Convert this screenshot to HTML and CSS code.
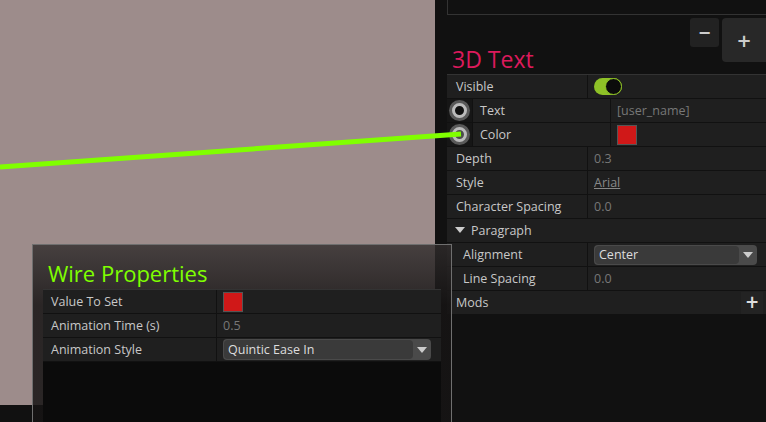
FILE: index.html
```html
<!DOCTYPE html>
<html lang="en">
<head>
    <meta charset="UTF-8">
    <title>Wire Editor</title>
    <link rel="stylesheet" href="styles.css">
</head>
<body>
    <div class="app">
        <div class="stage">
            <div class="canvas"></div>
        </div>

        <div class="inspector">
            <div class="topBox"></div>
            <div class="header">
                <h1 class="nodeTitle">3D Text</h1>
                <div class="zoomBtns">
                    <button class="zoomBtn small">&minus;</button>
                    <button class="zoomBtn big">+</button>
                </div>
            </div>

            <div class="props">
                <div class="row">
                    <div class="label">Visible</div>
                    <div class="value"><span class="toggle"><span class="knob"></span></span></div>
                </div>
                <div class="row">
                    <div class="socket"><span class="plug"></span></div>
                    <div class="label sockLabel">Text</div>
                    <div class="value">[user_name]</div>
                </div>
                <div class="row">
                    <div class="socket"><span class="plug linked"></span></div>
                    <div class="label sockLabel">Color</div>
                    <div class="value"><span class="swatch"></span></div>
                </div>
                <div class="row">
                    <div class="label">Depth</div>
                    <div class="value">0.3</div>
                </div>
                <div class="row">
                    <div class="label">Style</div>
                    <div class="value link">Arial</div>
                </div>
                <div class="row">
                    <div class="label">Character Spacing</div>
                    <div class="value">0.0</div>
                </div>
                <div class="row group">
                    <div class="label"><span class="caret"></span>Paragraph</div>
                </div>
                <div class="row">
                    <div class="label indent">Alignment</div>
                    <div class="value">
                        <div class="select"><span>Center</span><span class="arrow"></span></div>
                    </div>
                </div>
                <div class="row">
                    <div class="label indent">Line Spacing</div>
                    <div class="value">0.0</div>
                </div>
                <div class="row mods">
                    <div class="label">Mods</div>
                    <span class="addBtn">+</span>
                </div>
            </div>
        </div>
    </div>

    <div class="wirePanel">
        <h2 class="wireTitle">Wire Properties</h2>
        <div class="wireBody">
            <div class="row wide">
                <div class="label">Value To Set</div>
                <div class="value"><span class="swatch"></span></div>
            </div>
            <div class="row wide">
                <div class="label">Animation Time (s)</div>
                <div class="value">0.5</div>
            </div>
            <div class="row wide">
                <div class="label">Animation Style</div>
                <div class="value">
                    <div class="select"><span>Quintic Ease In</span><span class="arrow"></span></div>
                </div>
            </div>
        </div>
    </div>

    <svg class="wire" width="766" height="422" viewBox="0 0 766 422">
        <line x1="0" y1="167" x2="461" y2="134" stroke="#80ff00" stroke-width="5"/>
    </svg>
</body>
</html>
```

FILE: styles.css
```css
body {
    margin: 0;
    width: 766px;
    height: 422px;
    overflow: hidden;
    background: #111;
    font-family: "Open Sans", Arial, sans-serif;
    font-size: 12.5px;
    color: #c8c8c8;
    position: relative;
}
.app {
    display: flex;
    height: 422px;
}
.stage {
    width: 435px;
    background: #111;
}
.canvas {
    height: 405px;
    background: #9d8c8b;
}
.inspector {
    flex: 1;
    padding-left: 12px;
    display: flex;
    flex-direction: column;
}
.topBox {
    height: 14px;
    border-left: 1px solid #333;
    border-bottom: 1px solid #333;
}
.header {
    height: 59px;
    display: flex;
    justify-content: space-between;
    border-bottom: 1px solid #333;
}
.nodeTitle {
    margin: 0 0 1px 5px;
    align-self: flex-end;
    font-size: 23px;
    font-weight: normal;
    line-height: 28px;
    color: #dc1a5c;
}
.zoomBtns {
    display: flex;
    gap: 3px;
    margin-top: 3px;
}
.zoomBtn {
    border: none;
    padding: 0;
    color: #ccc;
    font-family: "DejaVu Sans", sans-serif;
    font-weight: bold;
}
.zoomBtn.small {
    width: 29px;
    height: 29px;
    background: #222;
    border-radius: 3px;
    font-size: 16px;
}
.zoomBtn.big {
    width: 44px;
    height: 44px;
    background: #282828;
    border-radius: 4px 0 0 4px;
    font-size: 18px;
}
.props {
    background: #111;
}
.row {
    display: flex;
    height: 23px;
    border-bottom: 1px solid #111;
    background: #1f1f1f;
}
.label {
    width: 131px;
    padding-left: 9px;
    line-height: 24px;
    white-space: nowrap;
}
.value {
    flex: 1;
    border-left: 1px solid #111;
    padding-left: 6px;
    line-height: 24px;
    color: #777;
    display: flex;
    align-items: center;
}
.link {
    text-decoration: underline;
    color: #888;
}
.socket {
    width: 25px;
    background: #161616;
    display: flex;
    align-items: center;
    justify-content: center;
    border-right: 1px solid #111;
}
.plug {
    width: 9px;
    height: 9px;
    border-radius: 50%;
    background: #111;
    border: 3px solid #bbb;
    box-shadow: 0 0 0 3px #595959;
}
.plug.linked {
    background: #4c4c4c;
}
.sockLabel {
    width: 130px;
    padding-left: 7px;
}
.toggle {
    width: 28px;
    height: 17px;
    border-radius: 9px;
    background: #8ec127;
    position: relative;
}
.knob {
    position: absolute;
    right: 0;
    top: 0;
    width: 15px;
    height: 15px;
    border-radius: 50%;
    background: #0b0b0b;
    border: 1px solid #8ec127;
}
.swatch {
    width: 18px;
    height: 18px;
    background: #d01818;
    border: 1px solid #555;
}
.group .label {
    width: auto;
    padding-left: 8px;
}
.caret {
    display: inline-block;
    border-left: 5px solid transparent;
    border-right: 5px solid transparent;
    border-top: 6px solid #ccc;
    margin-right: 6px;
    vertical-align: 2px;
}
.indent {
    padding-left: 16px;
    width: 124px;
}
.select {
    flex: 1;
    height: 20px;
    margin-right: 9px;
    background: #4a4a4a;
    border-radius: 4px;
    display: flex;
    align-items: center;
    padding: 0 0 0 1px;
}
.select span:first-child {
    flex: 1;
    height: 18px;
    line-height: 18px;
    background: #3a3a3a;
    border-radius: 4px;
    padding-left: 4px;
    color: #ddd;
}
.arrow {
    width: 18px;
    display: flex;
    justify-content: center;
}
.arrow::after {
    content: "";
    border-left: 5px solid transparent;
    border-right: 5px solid transparent;
    border-top: 6px solid #ccc;
}
.mods {
    justify-content: space-between;
    align-items: center;
    border-bottom: none;
}
.addBtn {
    width: 22px;
    height: 22px;
    margin-right: 3px;
    background: #232323;
    color: #ddd;
    font-family: "DejaVu Sans", sans-serif;
    font-weight: bold;
    font-size: 17px;
    line-height: 21px;
    text-align: center;
}
.wirePanel {
    position: absolute;
    left: 32px;
    top: 244px;
    width: 398px;
    height: 190px;
    padding: 0 10px;
    border: 1px solid #6f6f6f;
    background: linear-gradient(rgba(48, 44, 44, 0.8), rgba(22, 20, 20, 0.85) 60px);
}
.wireTitle {
    margin: 0;
    height: 44px;
    padding-left: 5px;
    font-size: 22px;
    font-weight: normal;
    line-height: 57px;
    color: #7fff00;
    white-space: nowrap;
}
.wireBody {
    height: 146px;
    background: #0b0b0b;
    border-top: 1px solid #333;
}
.wide .label {
    width: 165px;
    padding-left: 8px;
}
.wide .value {
    padding-left: 6px;
}
.wide .select {
    margin-right: 10px;
    height: 21px;
}
.wide .select span:first-child {
    height: 19px;
    line-height: 19px;
}
.wire {
    position: absolute;
    left: 0;
    top: 0;
    pointer-events: none;
}
```
